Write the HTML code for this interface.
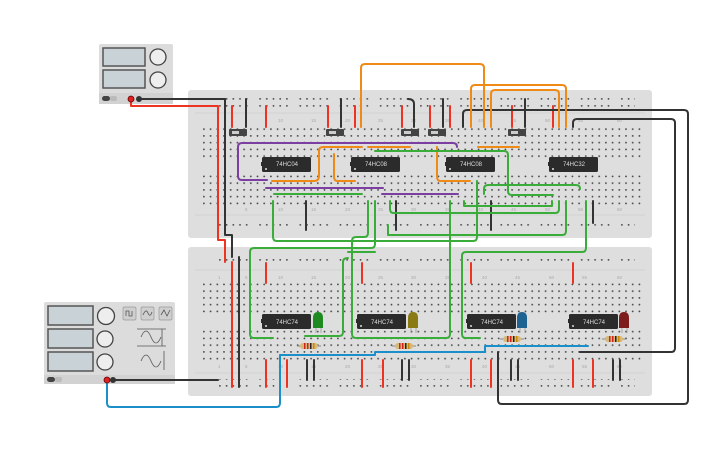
<!DOCTYPE html>
<html><head><meta charset="utf-8"><style>
html,body{margin:0;padding:0;background:#fff;width:725px;height:453px;overflow:hidden}
svg{display:block}
text{font-family:"Liberation Sans",sans-serif}
</style></head><body>
<svg width="725" height="453" viewBox="0 0 725 453" xmlns="http://www.w3.org/2000/svg">
<defs>
<pattern id="g" x="203" y="0" width="6.7" height="6.75" patternUnits="userSpaceOnUse">
<circle cx="0.9" cy="0.9" r="0.9" fill="#444"/>
</pattern>
<pattern id="r" x="219" y="0" width="40.2" height="7" patternUnits="userSpaceOnUse">
<circle cx="0.9" cy="0.9" r="0.9" fill="#444"/>
<circle cx="7.6" cy="0.9" r="0.9" fill="#444"/>
<circle cx="14.3" cy="0.9" r="0.9" fill="#444"/>
<circle cx="21" cy="0.9" r="0.9" fill="#444"/>
<circle cx="27.7" cy="0.9" r="0.9" fill="#444"/>
</pattern>
<g id="chip"><rect x="0" y="0" width="49" height="15" rx="1.5" fill="#2b2b2b"/><rect x="-1" y="5" width="3" height="4" fill="#2b2b2b"/><circle cx="4" cy="12" r="1" fill="#ddd"/></g>
<g id="res"><rect x="-3" y="2.5" width="24" height="1" fill="#888"/><rect x="0" y="0" width="18" height="6" rx="3" fill="#d8b878"/><rect x="4" y="0" width="1.5" height="6" fill="#c22"/><rect x="7" y="0" width="1.5" height="6" fill="#c22"/><rect x="10" y="0" width="1.5" height="6" fill="#222"/><rect x="13" y="0" width="1.5" height="6" fill="#c80"/></g>
</defs>

<rect x="188" y="90" width="464" height="148" rx="3" fill="#dedede"/>
<rect x="188" y="247" width="464" height="149" rx="3" fill="#dedede"/>
<g stroke="#cfcfcf" stroke-width="0.7">
<line x1="195" y1="113" x2="645" y2="113"/><line x1="195" y1="215" x2="645" y2="215"/>
<line x1="195" y1="270" x2="645" y2="270"/><line x1="195" y1="373" x2="645" y2="373"/>
</g>
<rect x="202" y="126" width="440" height="33" fill="url(#g)"/>
<rect x="202" y="173" width="440" height="33" fill="url(#g)"/>
<rect x="202" y="283" width="440" height="33" fill="url(#g)"/>
<rect x="202" y="330" width="440" height="33" fill="url(#g)"/>
<rect x="219" y="98" width="416" height="9" fill="url(#r)"/>
<rect x="219" y="222" width="416" height="9" fill="url(#r)"/>
<rect x="219" y="255" width="416" height="9" fill="url(#r)"/>
<rect x="219" y="379" width="416" height="9" fill="url(#r)"/>
<g font-size="4.5" fill="#aaa">
<text x="278" y="122">10</text><text x="311" y="122">15</text><text x="345" y="122">20</text><text x="378" y="122">25</text><text x="411" y="122">30</text><text x="445" y="122">35</text><text x="478" y="122">40</text><text x="511" y="122">45</text><text x="545" y="122">50</text><text x="578" y="122">55</text><text x="617" y="122">60</text>
<text x="245" y="211">5</text><text x="278" y="211">10</text><text x="311" y="211">15</text><text x="345" y="211">20</text><text x="378" y="211">25</text><text x="411" y="211">30</text><text x="445" y="211">35</text><text x="478" y="211">40</text><text x="511" y="211">45</text><text x="545" y="211">50</text><text x="578" y="211">55</text><text x="617" y="211">60</text>
<text x="218" y="279">1</text><text x="245" y="279">5</text><text x="278" y="279">10</text><text x="311" y="279">15</text><text x="345" y="279">20</text><text x="378" y="279">25</text><text x="411" y="279">30</text><text x="445" y="279">35</text><text x="482" y="279">40</text><text x="515" y="279">45</text><text x="549" y="279">50</text><text x="582" y="279">55</text><text x="617" y="279">60</text>
<text x="218" y="368">1</text><text x="245" y="368">5</text><text x="278" y="368">10</text><text x="311" y="368">15</text><text x="345" y="368">20</text><text x="378" y="368">25</text><text x="411" y="368">30</text><text x="445" y="368">35</text><text x="482" y="368">40</text><text x="515" y="368">45</text><text x="549" y="368">50</text><text x="582" y="368">55</text><text x="617" y="368">60</text>
</g>

<rect x="99" y="44" width="74" height="60" rx="2" fill="#dcdcdc"/>
<rect x="103" y="48" width="42" height="18" fill="#c9d2d6" stroke="#555" stroke-width="1.5"/>
<rect x="103" y="70" width="42" height="18" fill="#c9d2d6" stroke="#555" stroke-width="1.5"/>
<circle cx="158" cy="57" r="8" fill="#eee" stroke="#444" stroke-width="1.3"/>
<circle cx="158" cy="80" r="8" fill="#eee" stroke="#444" stroke-width="1.3"/>
<rect x="99" y="93" width="74" height="11" fill="#d2d2d2"/>
<rect x="102" y="96" width="8" height="5" rx="2.5" fill="#444"/><rect x="110" y="96" width="7" height="5" rx="2" fill="#bbb"/>

<rect x="44" y="302" width="131" height="82" rx="2" fill="#dcdcdc"/>
<rect x="48" y="306" width="45" height="19" fill="#c9d2d6" stroke="#555" stroke-width="1.5"/>
<rect x="48" y="329" width="45" height="19" fill="#c9d2d6" stroke="#555" stroke-width="1.5"/>
<rect x="48" y="352" width="45" height="19" fill="#c9d2d6" stroke="#555" stroke-width="1.5"/>
<circle cx="106" cy="316" r="8.5" fill="#eee" stroke="#444" stroke-width="1.3"/>
<circle cx="105" cy="339" r="8" fill="#eee" stroke="#444" stroke-width="1.3"/>
<circle cx="105" cy="362" r="8" fill="#eee" stroke="#444" stroke-width="1.3"/>
<g fill="#cfcfcf" stroke="#999" stroke-width="0.7">
<rect x="123" y="307" width="13" height="13" rx="1.5"/><rect x="141" y="307" width="13" height="13" rx="1.5"/><rect x="159" y="307" width="13" height="13" rx="1.5"/></g>
<g fill="none" stroke="#555" stroke-width="0.8">
<path d="M126 316 V311 H129 V316 H132 V311"/><path d="M143 315 Q146 308 148 313 Q150 318 152 312"/><path d="M161 315 L164 310 L167 316 L170 310"/>
<path d="M141 337 Q146 325 151 337 Q156 349 161 337"/><path d="M137 329 H166 M137 346 H166 M162 329 V346"/>
<path d="M141 361 Q146 349 151 361 Q156 373 161 361"/><path d="M164 351 V370"/>
</g>
<rect x="44" y="375" width="131" height="9" fill="#d2d2d2"/>
<rect x="47" y="377" width="8" height="5" rx="2.5" fill="#444"/><rect x="55" y="377" width="7" height="5" rx="2" fill="#bbb"/>

<g fill="none" stroke-width="2" stroke-linecap="round" stroke-linejoin="round">
<path d="M139 99 H225" stroke="#333"/>
<path d="M131 99 V106 H218 V240 H225 V262" stroke="#e32"/>
<path d="M225 99 V235 H232 V257" stroke="#333"/>
<path d="M232 262 V387" stroke="#e32"/>
<path d="M239 257 V387" stroke="#333"/>
<path d="M113 380 H218" stroke="#333"/>
<path d="M107 380 V403 Q107 407 111 407 H276 Q280 407 280 403 V355 H375 V352 H485 V346 H588" stroke="#1a8fc9"/>
<g stroke="#e32"><path d="M232 106 V127"/><path d="M266 106 V127"/><path d="M328 106 V127"/><path d="M355 106 V127"/><path d="M402 106 V127"/><path d="M430 106 V127"/><path d="M450 106 V127"/><path d="M512 106 V127"/><path d="M553 106 V127"/></g>
<g stroke="#333"><path d="M246 99 V127"/><path d="M341 99 V127"/><path d="M408 99 Q414 99 414 104 V127"/><path d="M443 99 V127"/><path d="M525 99 V127"/>
<path d="M306 201 V230"/><path d="M396 201 V230"/><path d="M491 201 V230"/><path d="M593 201 V223"/>
<path d="M463 127 V114 Q463 110 467 110 H684 Q688 110 688 114 V400 Q688 404 684 404 H502 Q498 404 498 400 V352"/>
<path d="M573 127 V123 Q573 119 577 119 H671 Q675 119 675 123 V348 Q675 352 671 352 H580"/>
</g>
<g stroke="#ef8a17">
<path d="M361 127 V68 Q361 64 365 64 H480 Q484 64 484 68 V127"/>
<path d="M471 127 V89 Q471 85 475 85 H562 Q566 85 566 89 V127"/>
<path d="M491 127 V94 Q491 90 495 90 H555 Q559 90 559 94 V127"/>
<path d="M272 181 H314 Q319 181 319 176 V151 Q319 147 323 147 H362"/>
<path d="M368 147 H410"/>
<path d="M334 154 V177 Q334 181 338 181 H355"/>
<path d="M437 147 V177 Q437 181 441 181 H470"/>
<path d="M478 147 H519"/>
</g>
<g stroke="#7a3fa0">
<path d="M267 180 H242 Q238 180 238 176 V147 Q238 143 242 143 H453 Q457 143 457 147"/>
<path d="M266 188 H383"/>
<path d="M382 194 H458"/>
</g>
<g stroke="#3aac3a">
<path d="M273 201 V237 Q273 241 277 241 H473 Q477 241 477 237 V181"/>
<path d="M274 194 H362"/>
<path d="M368 201 V233 Q368 237 364 237 H356 Q352 237 352 241 V334 Q352 338 356 338 H446 Q450 338 450 334 V201"/>
<path d="M375 201 V244 Q375 248 371 248 H254 Q250 248 250 252 V334 Q250 338 254 338 H273"/>
<path d="M348 258 Q343 258 343 262 V332 Q343 336 339 336 H305"/>
<path d="M375 252 H348"/>
<path d="M390 201 V209 Q390 213 394 213 H555 Q559 213 559 209 V201"/>
<path d="M464 201 V206 H552 V201"/>
<path d="M566 201 V231 Q566 235 562 235 H388 V225"/>
<path d="M375 151 H504 Q508 151 508 155 V191 Q508 195 512 195 H553"/>
<path d="M484 194 V189 Q484 185 488 185 H576 Q580 185 580 189"/>
<path d="M586 201 V248 Q586 252 582 252 H466 Q462 252 462 256 V334 Q462 338 466 338 H480"/>
</g>
<g stroke="#e32"><path d="M266 263 V283"/><path d="M362 263 V283"/><path d="M471 263 V283"/><path d="M573 263 V283"/>
<path d="M266 360 V387"/><path d="M287 360 V387"/><path d="M362 360 V387"/><path d="M383 360 V387"/><path d="M471 360 V387"/><path d="M491 360 V387"/><path d="M573 360 V387"/><path d="M593 360 V387"/></g>
<g stroke="#333"><path d="M307 360 V380"/><path d="M314 360 V380"/><path d="M402 360 V380"/><path d="M409 360 V380"/><path d="M511 360 V380"/><path d="M518 360 V380"/><path d="M613 360 V380"/><path d="M620 360 V380"/></g>
</g>
<circle cx="131" cy="99" r="3" fill="#d22" stroke="#600" stroke-width="0.8"/>
<circle cx="139" cy="99" r="3" fill="#333"/>
<circle cx="107" cy="380" r="3" fill="#d22" stroke="#600" stroke-width="0.8"/>
<circle cx="113" cy="380" r="3" fill="#333"/>

<g>
<rect x="229" y="129" width="18" height="7" rx="1" fill="#444"/><rect x="232" y="131" width="7" height="3" fill="#ccc"/>
<rect x="326" y="129" width="18" height="7" rx="1" fill="#444"/><rect x="329" y="131" width="7" height="3" fill="#ccc"/>
<rect x="401" y="129" width="18" height="7" rx="1" fill="#444"/><rect x="404" y="131" width="7" height="3" fill="#ccc"/>
<rect x="428" y="129" width="18" height="7" rx="1" fill="#444"/><rect x="431" y="131" width="7" height="3" fill="#ccc"/>
<rect x="508" y="129" width="18" height="7" rx="1" fill="#444"/><rect x="511" y="131" width="7" height="3" fill="#ccc"/>
</g>

<g font-size="6" fill="#ddd">
<use href="#chip" x="262" y="157"/><text x="276" y="166">74HC04</text>
<use href="#chip" x="351" y="157"/><text x="365" y="166">74HC08</text>
<use href="#chip" x="446" y="157"/><text x="460" y="166">74HC08</text>
<use href="#chip" x="549" y="157"/><text x="563" y="166">74HC32</text>
<use href="#chip" x="262" y="314"/><text x="276" y="324">74HC74</text>
<use href="#chip" x="357" y="314"/><text x="371" y="324">74HC74</text>
<use href="#chip" x="467" y="314"/><text x="481" y="324">74HC74</text>
<use href="#chip" x="569" y="314"/><text x="583" y="324">74HC74</text>
</g>
<g stroke="#999" stroke-width="0.8"><path d="M316 328 V333 M321 328 V333 M411 328 V333 M416 328 V333 M520 328 V333 M525 328 V333 M622 328 V333 M627 328 V333"/></g>
<path d="M313 328 V318 Q313 312 318 312 Q323 312 323 318 V328 Z" fill="#1f8a1f"/>
<path d="M408 328 V318 Q408 312 413 312 Q418 312 418 318 V328 Z" fill="#8a7a14"/>
<path d="M517 328 V318 Q517 312 522 312 Q527 312 527 318 V328 Z" fill="#1e6391"/>
<path d="M619 328 V318 Q619 312 624 312 Q629 312 629 318 V328 Z" fill="#7c1c1c"/>
<use href="#res" x="300" y="343"/>
<use href="#res" x="395" y="343"/>
<use href="#res" x="503" y="336"/>
<use href="#res" x="605" y="336"/>
</svg>
</body></html>
